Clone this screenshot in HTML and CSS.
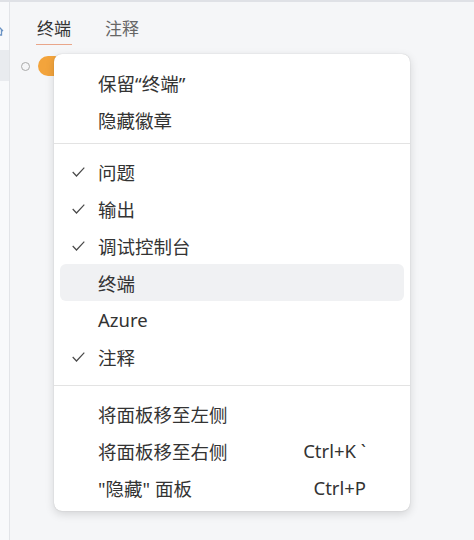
FILE: index.html
```html
<!DOCTYPE html>
<html lang="zh-CN">
<head>
    <meta charset="UTF-8">
    <meta name="viewport" content="width=device-width, initial-scale=1.0">
    <title>面板菜单</title>
    <link rel="stylesheet" href="styles.css">
</head>
<body>
    <div class="topbar"></div>
    <div class="shell">
        <div class="sidebar">
            <svg class="side-icon" width="10" height="10" viewBox="0 0 10 10">
                <path d="M1 5 L5 1 L9 5 M2.5 4 V9 H7.5 V4" fill="none" stroke="#6b93c4" stroke-width="1.3"/>
            </svg>
            <div class="side-active"></div>
        </div>
        <div class="main">
            <div class="tabs">
                <div class="tab active">终端</div>
                <div class="tab">注释</div>
            </div>
            <div class="row">
                <span class="radio"></span>
                <span class="pill"></span>
            </div>
        </div>
    </div>

    <div class="menu">
        <div class="item"><span class="check"></span><span class="label">保留“终端”</span></div>
        <div class="item"><span class="check"></span><span class="label">隐藏徽章</span></div>
        <div class="sep"></div>
        <div class="item"><span class="check"><svg width="13" height="10" viewBox="0 0 13 10"><polyline points="0.7,5 4.5,9 12.3,0.6" fill="none" stroke="#4a4a4a" stroke-width="1.2"/></svg></span><span class="label">问题</span></div>
        <div class="item"><span class="check"><svg width="13" height="10" viewBox="0 0 13 10"><polyline points="0.7,5 4.5,9 12.3,0.6" fill="none" stroke="#4a4a4a" stroke-width="1.2"/></svg></span><span class="label">输出</span></div>
        <div class="item"><span class="check"><svg width="13" height="10" viewBox="0 0 13 10"><polyline points="0.7,5 4.5,9 12.3,0.6" fill="none" stroke="#4a4a4a" stroke-width="1.2"/></svg></span><span class="label">调试控制台</span></div>
        <div class="item hover"><span class="check"></span><span class="label">终端</span></div>
        <div class="item"><span class="check"></span><span class="label">Azure</span></div>
        <div class="item"><span class="check"><svg width="13" height="10" viewBox="0 0 13 10"><polyline points="0.7,5 4.5,9 12.3,0.6" fill="none" stroke="#4a4a4a" stroke-width="1.2"/></svg></span><span class="label">注释</span></div>
        <div class="sep second"></div>
        <div class="item"><span class="check"></span><span class="label">将面板移至左侧</span></div>
        <div class="item"><span class="check"></span><span class="label">将面板移至右侧</span><span class="key">Ctrl+K `</span></div>
        <div class="item"><span class="check"></span><span class="label">"隐藏" 面板</span><span class="key">Ctrl+P</span></div>
    </div>
</body>
</html>
```

FILE: styles.css
```css
html, body {
    margin: 0;
    padding: 0;
}
body {
    width: 474px;
    height: 540px;
    overflow: hidden;
    background: #f5f6f8;
    font-family: "Noto Sans", "Noto Sans CJK SC", sans-serif;
    color: #333;
    position: relative;
}
.topbar {
    height: 2px;
    background: #dfe1e6;
}
.shell {
    display: flex;
    height: 538px;
}
.sidebar {
    width: 9px;
    border-right: 1px solid #e2e4e8;
    background: #f8f9fb;
    position: relative;
}
.side-icon {
    position: absolute;
    left: -6px;
    top: 24px;
}
.side-active {
    margin-top: 48px;
    height: 31px;
    background: #e9ebef;
}
.main {
    flex: 1;
}
.tabs {
    display: flex;
    gap: 32px;
    padding-left: 26px;
    height: 48px;
}
.tab {
    font-size: 17px;
    line-height: 20px;
    padding: 17px 1px 0;
    color: #666;
    height: 25px;
}
.tab.active {
    color: #333;
    border-bottom: 1.5px solid #e9a68a;
}
.row {
    display: flex;
    align-items: center;
    gap: 8px;
    padding-left: 11px;
    margin-top: 6px;
    height: 20px;
}
.radio {
    width: 7px;
    height: 7px;
    border: 1.5px solid #aaa;
    border-radius: 50%;
}
.pill {
    width: 40px;
    height: 20px;
    border-radius: 10px;
    background: #f3a43c;
}
.menu {
    position: absolute;
    left: 54px;
    top: 54px;
    width: 344px;
    padding: 10px 6px 5px;
    background: #fff;
    border-radius: 8px;
    box-shadow: 0 0 1px rgba(0, 0, 0, 0.25), 0 3px 10px rgba(0, 0, 0, 0.14);
}
.item {
    display: flex;
    align-items: center;
    height: 37px;
    padding: 0 38px 0 12px;
    font-size: 18.5px;
    border-radius: 6px;
}
.item.hover {
    background: #f0f1f3;
}
.check {
    width: 26px;
    display: flex;
    align-items: center;
}
.key {
    margin-left: auto;
}
.sep {
    height: 1px;
    background: #e3e3e3;
    margin: 5px -6px 9px;
}
.sep.second {
    margin-top: 10px;
}
```
